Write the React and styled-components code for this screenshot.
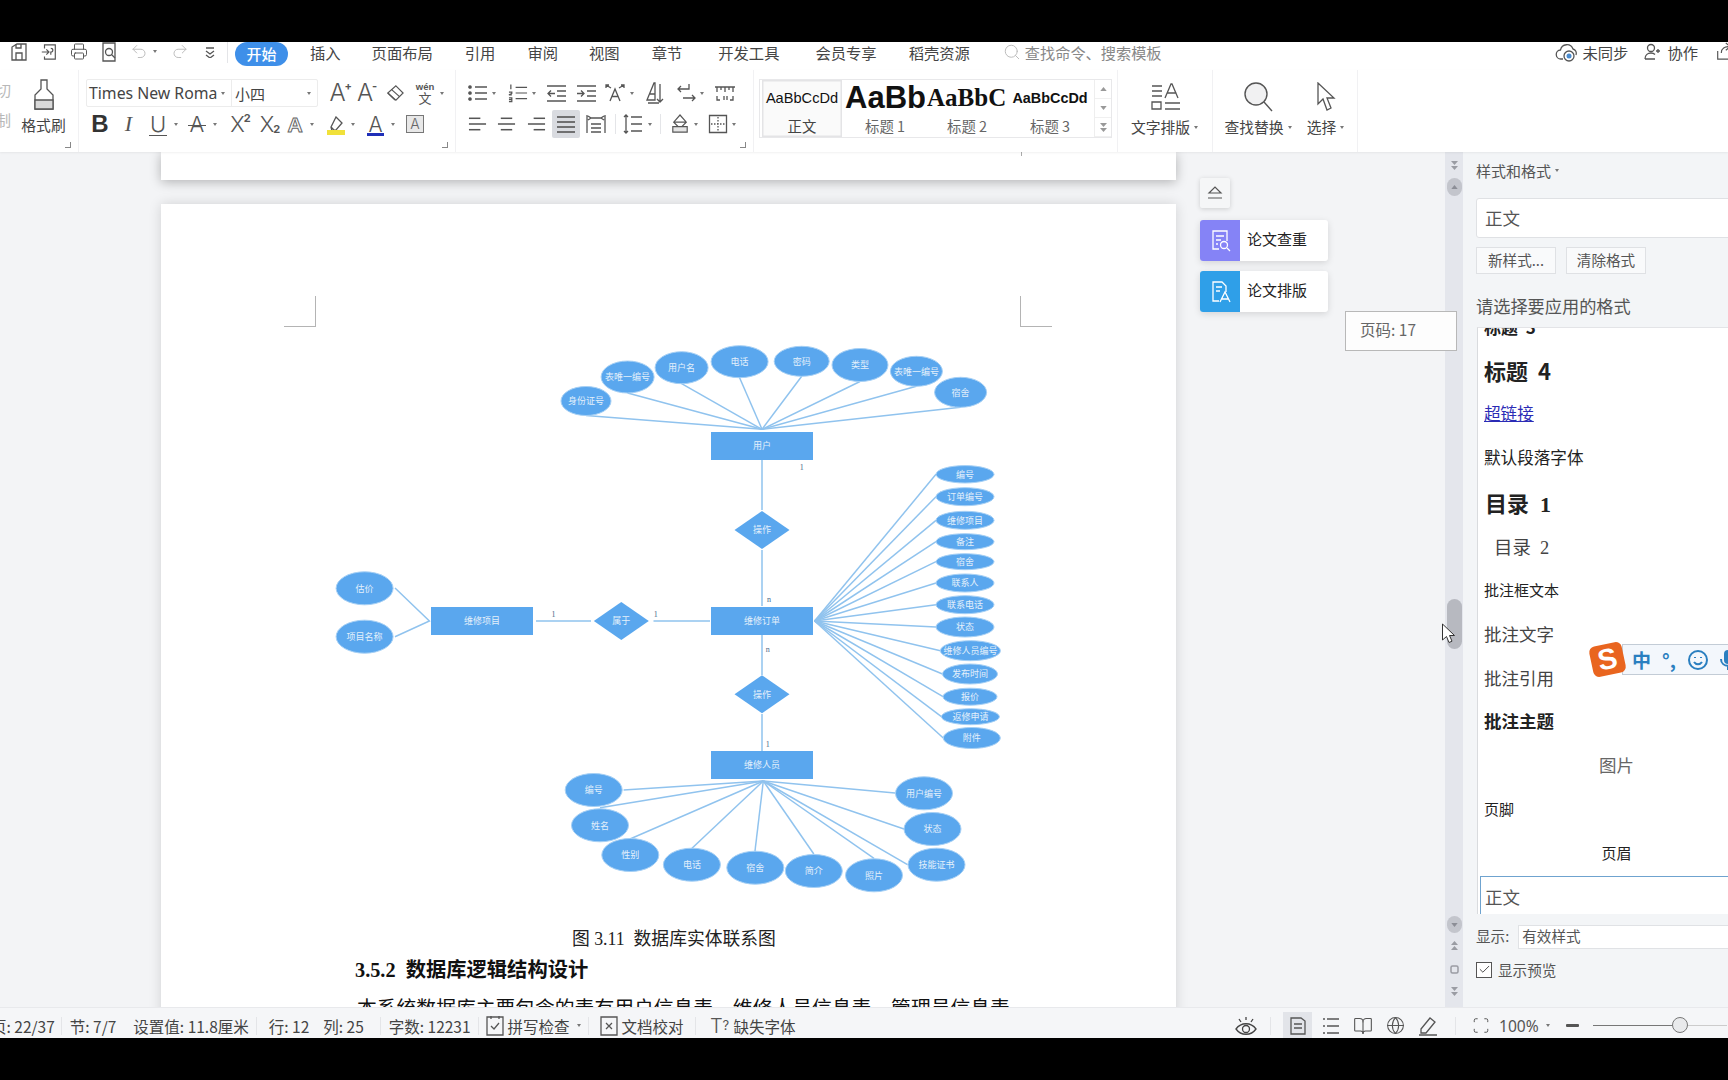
import React from "react";
import styled, { createGlobalStyle } from "styled-components";
import { Printer, Undo2, Redo2, Search, Globe, BookOpen, Scan, Check } from "lucide-react";

const GlobalStyle = createGlobalStyle`
  html, body {
    margin: 0;
    padding: 0;
    background: #000;
    overflow: hidden;
  }
  * { box-sizing: border-box; }
`;

const sans = `"Noto Sans CJK SC", "Noto Sans", sans-serif`;
const serif = `"Liberation Serif", "Noto Sans CJK SC", serif`;
const latin = `"Liberation Sans", "Noto Sans CJK SC", sans-serif`;
const thin = `Inter, "Liberation Sans", sans-serif`;

const Screen = styled.div`
  width: 1728px;
  height: 1080px;
  display: flex;
  flex-direction: column;
  overflow: hidden;
  background: #000;
  position: relative;
  font-family: ${sans};
  color: #444;
`;

const BlackBar = styled.div`
  height: 42px;
  flex-shrink: 0;
  background: #000;
`;

/* ---------- tab row ---------- */
const TabRow = styled.div`
  height: 28px;
  flex-shrink: 0;
  display: flex;
  align-items: center;
  background: #fff;
  padding: 0 0 9px 10px;
  overflow: hidden;
`;

const QuickBtn = styled.span`
  width: ${(p) => p.$w || 18}px;
  height: 22px;
  flex-shrink: 0;
  display: flex;
  align-items: center;
  justify-content: center;
  margin-left: ${(p) => p.$ml || 0}px;
  color: ${(p) => (p.$off ? "#bbb" : "#555")};
`;

const Divider = styled.span`
  width: 1px;
  height: ${(p) => p.$h || 22}px;
  flex-shrink: 0;
  background: #e4e5e8;
  margin-left: ${(p) => p.$ml || 0}px;
`;

const ActiveTab = styled.div`
  width: 53px;
  height: 24px;
  margin-left: 7px;
  align-self: flex-start;
  border-radius: 12px;
  background: #3e8fe9;
  color: #fff;
  font-size: 15px;
  font-weight: 500;
  padding-bottom: 2px;
  display: flex;
  align-items: center;
  justify-content: center;
`;

const Tab = styled.span`
  font-size: 15.3px;
  color: #444;
  white-space: nowrap;
  margin-left: ${(p) => p.$ml}px;
`;

const SearchHint = styled.span`
  font-size: 15.2px;
  color: #888;
  white-space: nowrap;
  margin-left: 4px;
`;

const RightTools = styled.div`
  margin-left: auto;
  margin-right: -5px;
  display: flex;
  align-items: center;
  font-size: 14.8px;
  color: #444;
  white-space: nowrap;
`;

/* ---------- ribbon ---------- */
const Ribbon = styled.div`
  height: 82px;
  flex-shrink: 0;
  display: flex;
  background: #fff;
  box-shadow: 0 1px 2px rgba(0, 0, 0, 0.06);
  position: relative;
  z-index: 2;
`;

const Group = styled.div`
  width: ${(p) => p.$w}px;
  flex-shrink: 0;
  height: 82px;
  position: relative;
  padding-top: ${(p) => p.$pt ?? 9}px;
  padding-left: ${(p) => p.$pl || 0}px;
  border-right: 1px solid #f1f1f3;
  display: flex;
  flex-direction: ${(p) => (p.$row ? "row" : "column")};
  gap: ${(p) => (p.$row ? p.$gap || 0 : 3)}px;
`;

const Launcher = styled.span`
  position: absolute;
  right: 7px;
  bottom: 4px;
  width: 6px;
  height: 6px;
  border-right: 1px solid #888;
  border-bottom: 1px solid #888;
`;

const CutCol = styled.div`
  width: 21px;
  flex-shrink: 0;
  display: flex;
  flex-direction: column;
  gap: 15px;
  padding-top: 3px;
  overflow: hidden;
  color: #b8b8b8;
  font-size: 15px;
  line-height: 15px;
  text-indent: -4px;
`;

const BigTool = styled.div`
  width: ${(p) => p.$w}px;
  flex-shrink: 0;
  display: flex;
  flex-direction: column;
  align-items: center;
`;

const BigIcon = styled.div`
  height: 32px;
  display: flex;
  align-items: center;
  justify-content: center;
  color: #555;
  margin-left: ${(p) => p.$ml || 0}px;
`;

const BigLabel = styled.div`
  margin-top: 4px;
  font-size: 14.8px;
  line-height: 20px;
  color: #444;
  white-space: nowrap;
  display: flex;
  align-items: center;
`;

const ToolRow = styled.div`
  height: 28px;
  display: flex;
  align-items: center;
`;

const FontCombo = styled.div`
  width: 232px;
  height: 28px;
  flex-shrink: 0;
  display: flex;
  align-items: center;
  border: 1px solid #ececec;
  border-radius: 2px;
  font-family: "Noto Sans", ${sans};
  font-size: 15.8px;
  color: #444;
`;

const FontName = styled.div`
  width: 145px;
  height: 100%;
  padding-left: 2px;
  display: flex;
  align-items: center;
  border-right: 1px solid #ececec;
  white-space: nowrap;
  overflow: hidden;
`;

const FontSize = styled.div`
  flex: 1;
  padding: 0 6px 0 3px;
  display: flex;
  align-items: center;
  justify-content: space-between;
  font-size: 15px;
`;

const Tool = styled.span`
  width: ${(p) => p.$w}px;
  height: ${(p) => p.$h || 24}px;
  flex-shrink: 0;
  margin-left: ${(p) => p.$ml || 0}px;
  display: flex;
  align-items: center;
  justify-content: center;
  color: #555;
  position: relative;
`;

const ActiveTool = styled(Tool)`
  background: #d9dbe0;
  border-radius: 2px;
`;

const BoxedTool = styled(Tool)`
  background: #e8e8e8;
  border: 1px solid #777;
`;

const Caret = styled.span`
  width: 0;
  height: 0;
  flex-shrink: 0;
  margin-left: ${(p) => p.$ml || 0}px;
  border-left: 2.5px solid transparent;
  border-right: 2.5px solid transparent;
  border-top: 3px solid #777;
`;

const Glyph = styled.span`
  font-family: ${(p) => p.$font || thin};
  font-size: ${(p) => p.$size || 22}px;
  font-weight: ${(p) => p.$weight || 300};
  font-style: ${(p) => (p.$italic ? "italic" : "normal")};
  line-height: 1;
  color: ${(p) => p.$color || "#555"};
  position: relative;
`;

const HollowGlyph = styled(Glyph)`
  color: #fff;
  -webkit-text-stroke: 1px #666;
`;

const Sup = styled.span`
  font-size: 11px;
  font-weight: 700;
  position: absolute;
  left: 100%;
  margin-left: -1px;
  top: ${(p) => (p.$sub ? 11 : 0)}px;
`;

const WenStack = styled.span`
  display: flex;
  flex-direction: column;
  align-items: center;
  line-height: 1;
  font-size: 13px;
  color: #555;
  span {
    font-family: ${latin};
    font-size: 9.5px;
    font-weight: 700;
    margin-bottom: -1px;
  }
`;

const Underbar = styled.span`
  position: absolute;
  left: ${(p) => p.$l ?? 0}px;
  right: ${(p) => p.$l ?? 0}px;
  bottom: ${(p) => p.$b ?? 1}px;
  height: ${(p) => p.$t ?? 3}px;
  background: ${(p) => p.$c};
`;

const Gallery = styled.div`
  width: 353px;
  height: 59px;
  margin-left: 5px;
  display: flex;
  align-items: stretch;
  border: 1px solid #e8e8ea;
  padding-left: 2px;
`;

const StyleCell = styled.div`
  width: 80px;
  flex-shrink: 0;
  margin-left: ${(p) => p.$ml || 0}px;
  display: flex;
  flex-direction: column;
  align-items: center;
  background: ${(p) => (p.$on ? "#fafafa" : "transparent")};
  box-shadow: ${(p) => (p.$on ? "inset 0 0 0 1.5px #e4e4e6" : "none")};
  overflow: hidden;
`;

const Sample = styled.div`
  height: 36px;
  width: 100%;
  display: flex;
  align-items: center;
  justify-content: ${(p) => p.$j || "center"};
  font-family: ${(p) => p.$font || latin};
  font-size: ${(p) => p.$size}px;
  font-weight: ${(p) => p.$weight || 400};
  color: #111;
  white-space: nowrap;
  overflow: hidden;
`;

const StyleName = styled.div`
  font-size: 14.4px;
  line-height: 20px;
  color: ${(p) => (p.$on ? "#444" : "#666")};
  white-space: nowrap;
`;

const GalleryScroll = styled.div`
  width: 17px;
  margin-left: 4px;
  border-left: 1px solid #eee;
  display: flex;
  flex-direction: column;
  color: #999;
  span {
    flex: 1;
    display: flex;
    align-items: center;
    justify-content: center;
    border-bottom: 1px solid #f0f0f0;
  }
`;

/* ---------- main ---------- */
const Main = styled.div`
  height: 855px;
  flex-shrink: 0;
  display: flex;
  position: relative;
  background: #f3f5f7;
`;

const DocArea = styled.div`
  width: 1445px;
  flex-shrink: 0;
  height: 100%;
  position: relative;
  overflow: hidden;
  background: #f3f4f6;
`;

const PageEnd = styled.div`
  width: 1015px;
  height: 28px;
  margin-left: 161px;
  background: #fff;
  box-shadow: 0 2px 12px rgba(0, 0, 0, 0.28);
  display: flex;
  justify-content: flex-end;
  padding-right: 154px;
`;

const CropTick = styled.span`
  width: 1px;
  height: 4px;
  background: #aaa;
`;

const Page = styled.div`
  width: 1015px;
  height: 1100px;
  margin: 24px 0 0 161px;
  padding: 92px 124px 0 123px;
  background: #fff;
  box-shadow: 0 0 12px rgba(0, 0, 0, 0.14);
  color: #111;
`;

const CropRow = styled.div`
  display: flex;
  justify-content: space-between;
`;

const CropMark = styled.span`
  width: 32px;
  height: 31px;
  margin-bottom: -1px;
  border-bottom: 1px solid #b4b4b4;
  border-right: ${(p) => (p.$right ? "none" : "1px solid #b4b4b4")};
  border-left: ${(p) => (p.$right ? "1px solid #b4b4b4" : "none")};
`;

const DiagramSvg = styled.svg`
  display: block;
  width: 767px;
  height: 600px;
`;

const Caption = styled.div`
  height: 26px;
  line-height: 26px;
  margin-left: 288px;
  font-family: ${serif};
  font-size: 17.8px;
  white-space: pre;
  color: #222;
`;

const SectionHead = styled.div`
  height: 28px;
  line-height: 28px;
  margin: 4px 0 0 71px;
  font-family: ${serif};
  font-size: 20.3px;
  font-weight: 700;
  white-space: pre;
  color: #111;
`;

const Para = styled.div`
  margin: 10px 0 0 73px;
  font-family: ${serif};
  font-size: 19.8px;
  line-height: 28px;
  white-space: nowrap;
  color: #111;
`;

const FloatCol = styled.div`
  position: absolute;
  left: 1200px;
  top: 26px;
  display: flex;
  flex-direction: column;
  align-items: flex-start;
  gap: 10px;
`;

const CollapseBtn = styled.div`
  width: 30px;
  height: 30px;
  margin-bottom: 2px;
  display: flex;
  align-items: center;
  justify-content: center;
  background: #f5f6f7;
  border-radius: 2px;
  box-shadow: 0 1px 5px rgba(0, 0, 0, 0.16);
  color: #555;
`;

const FloatCard = styled.div`
  width: 128px;
  height: 41px;
  display: flex;
  align-items: center;
  background: #fff;
  border-radius: 3px;
  overflow: hidden;
  box-shadow: 0 2px 7px rgba(0, 0, 0, 0.13);
  font-size: 15px;
  color: #222;
`;

const FloatLabel = styled.span`
  margin-bottom: 4px;
`;

const FloatIcon = styled.div`
  width: 40px;
  height: 100%;
  margin-right: 7px;
  display: flex;
  align-items: center;
  justify-content: center;
  background: ${(p) => p.$bg};
  color: #fff;
`;

const PageTip = styled.div`
  position: absolute;
  left: 1345px;
  top: 159px;
  width: 112px;
  height: 40px;
  padding: 0 0 5px 14px;
  display: flex;
  align-items: center;
  background: #fdfdfd;
  border: 1px solid #b8b8b8;
  font-size: 15.5px;
  color: #666;
  z-index: 3;
`;

/* scrollbar */
const ScrollTrack = styled.div`
  width: 18px;
  flex-shrink: 0;
  height: 100%;
  padding-top: 8px;
  background: #e4e6ec;
  display: flex;
  flex-direction: column;
  align-items: center;
  color: #9a9ca3;
`;

const ScrollMark = styled.span`
  height: ${(p) => p.$h}px;
  margin-top: ${(p) => p.$mt || 0}px;
  display: flex;
  align-items: center;
  justify-content: center;
`;

const ScrollButton = styled.div`
  width: 15px;
  height: ${(p) => p.$h}px;
  margin-top: ${(p) => p.$mt}px;
  border-radius: 8px;
  background: #c3c5cc;
  color: #8c8e96;
  display: flex;
  align-items: center;
  justify-content: center;
`;

const Thumb = styled.div`
  width: 15px;
  height: 50px;
  margin-top: 403px;
  border-radius: 8px;
  background: #b7b9c0;
`;

/* side panel */
const Panel = styled.aside`
  width: 300px;
  flex-shrink: 0;
  height: 100%;
  padding: 7px 0 0 13px;
  background: #f3f5f7;
  display: flex;
  flex-direction: column;
  align-items: flex-start;
`;

const PanelTitle = styled.div`
  height: 22px;
  display: flex;
  align-items: center;
  font-size: 15px;
  color: #555;
`;

const StyleInput = styled.div`
  width: 290px;
  height: 40px;
  margin-top: 17px;
  padding: 0 0 2px 8px;
  display: flex;
  align-items: center;
  background: #fff;
  border: 1px solid #dfe1e4;
  border-radius: 3px;
  font-family: ${serif};
  font-size: 17.5px;
  color: #555;
`;

const PanelButtons = styled.div`
  margin-top: 9px;
  display: flex;
  gap: 10px;
`;

const PanelButton = styled.div`
  width: 80px;
  height: 27px;
  padding-bottom: 2px;
  display: flex;
  align-items: center;
  justify-content: center;
  background: #f9fafb;
  border: 1px solid #dfe1e4;
  font-size: 14.6px;
  color: #555;
`;

const SectionLabel = styled.div`
  height: 24px;
  margin-top: 20px;
  line-height: 24px;
  font-size: 17.2px;
  color: #555;
`;

const StyleList = styled.div`
  width: 278px;
  height: 587px;
  margin: 9px 0 0 1px;
  background: #fff;
  border-left: 1px solid #d9dbde;
  border-top: 1px solid #e3e4e7;
  overflow: hidden;
`;

const ListItem = styled.div`
  height: 44px;
  flex-shrink: 0;
  margin-top: ${(p) => p.$mt || 0}px;
  display: flex;
  align-items: center;
  justify-content: ${(p) => (p.$center ? "center" : "flex-start")};
  padding-left: ${(p) => (p.$center ? 0 : p.$pl || 6)}px;
  font-family: ${(p) => (p.$serif ? serif : sans)};
  font-size: ${(p) => p.$size || 15}px;
  font-weight: ${(p) => (p.$bold ? 700 : 400)};
  color: ${(p) => p.$color || "#222"};
  white-space: pre;
  text-decoration: ${(p) => (p.$link ? "underline" : "none")};
`;

const SelectedItem = styled.div`
  height: 38px;
  margin: 2px 0 0 2px;
  padding: 2px 0 0 4px;
  display: flex;
  align-items: center;
  border: 1px solid #6fa3cf;
  border-bottom: none;
  font-family: ${serif};
  font-size: 17.5px;
  color: #555;
`;

const ShowRow = styled.div`
  margin-top: 11px;
  height: 24px;
  padding-bottom: 3px;
  display: flex;
  align-items: center;
  font-size: 14.6px;
  color: #555;
  white-space: nowrap;
`;

const ShowSelect = styled.div`
  width: 280px;
  height: 24px;
  flex-shrink: 0;
  margin: 3px 0 0 9px;
  padding: 0 0 3px 3px;
  display: flex;
  align-items: center;
  background: #fff;
  border: 1px solid #e0e2e5;
`;

const CheckRow = styled.div`
  margin-top: 10px;
  display: flex;
  align-items: center;
  gap: 6px;
  font-size: 14.6px;
  color: #555;
`;

const CheckBox = styled.span`
  width: 16px;
  height: 16px;
  display: flex;
  align-items: center;
  justify-content: center;
  border: 1px solid #555;
  background: #fff;
  color: #333;
`;

/* ime bar and mouse pointer lie over the page */
const ImeBar = styled.div`
  position: absolute;
  left: 1591px;
  top: 490px;
  width: 160px;
  height: 35px;
  display: flex;
  align-items: center;
  z-index: 4;
`;

const ImeLogo = styled.div`
  width: 33px;
  height: 31px;
  flex-shrink: 0;
  position: relative;
  z-index: 1;
  transform: rotate(-12deg);
  border-radius: 6px;
  background: #e9651f;
  color: #fff;
  font-family: ${latin};
  font-size: 29px;
  font-weight: 700;
  line-height: 31px;
  text-align: center;
`;

const ImeBody = styled.div`
  flex: 1;
  height: 31px;
  margin-left: -2px;
  padding-left: 9px;
  display: flex;
  align-items: center;
  gap: 11px;
  background: #f3f7fc;
  border: 1px solid #c3ccd6;
  color: #2a7fc0;
  font-size: 19px;
  font-weight: 700;
`;

const Pointer = styled.svg`
  position: absolute;
  left: 1441px;
  top: 471px;
  z-index: 5;
`;

/* ---------- status bar ---------- */
const StatusBar = styled.div`
  height: 31px;
  flex-shrink: 0;
  display: flex;
  align-items: center;
  padding-top: 5px;
  background: #f5f6f8;
  border-top: 1px solid #e8e9ec;
  overflow: hidden;
  font-size: 15.5px;
  color: #444;
  white-space: nowrap;
  position: relative;
  z-index: 2;
`;

const StatusText = styled.span`
  margin-left: ${(p) => p.$ml}px;
  flex-shrink: 0;
`;

const StatusRight = styled.div`
  width: 493px;
  margin-left: auto;
  flex-shrink: 0;
  display: flex;
  align-items: center;
`;

const StatusActive = styled(Tool)`
  background: #e2e4e9;
  margin-top: 0;
`;

const ZoomText = styled.span`
  margin-left: 9px;
  font-family: "Noto Sans", ${sans};
  font-size: 15.6px;
  color: #555;
`;

const MinusBar = styled.span`
  width: 13px;
  height: 3px;
  margin-left: 16px;
  background: #555;
  border-radius: 1px;
`;

const ZoomTrack = styled.div`
  width: 134px;
  height: 1px;
  margin-left: 14px;
  background: linear-gradient(to right, #777 0, #777 87px, #ccc 87px);
  position: relative;
`;

const ZoomKnob = styled.span`
  position: absolute;
  left: 79px;
  top: -8px;
  width: 16px;
  height: 16px;
  border-radius: 50%;
  background: #e9eaec;
  border: 1px solid #777;
`;

/* ---------- drawn icons ---------- */
const Svg = ({ w = 20, h = 20, vb, sw = 1.3, children }) => (
  <svg width={w} height={h} viewBox={vb || `0 0 ${w} ${h}`} fill="none" stroke="currentColor" strokeWidth={sw}>
    {children}
  </svg>
);

const SaveIcon = () => (
  <Svg w={18} h={20}>
    <path d="M2 18V5l5-3h9v16z" />
    <path d="M6 18v-7h6v7M6 2v4h5V2" />
  </Svg>
);
const ExportIcon = () => (
  <Svg w={20} h={20}>
    <path d="M5 6V2h12v16H5v-3" />
    <path d="M2 10h8M7 7l3 3-3 3" />
    <path d="M12 6c3 0 3 4 0 4v3" />
  </Svg>
);
const PreviewIcon = () => (
  <Svg w={18} h={20}>
    <path d="M3 1h12v18H3z" />
    <circle cx="9" cy="10" r="3.5" />
    <path d="M11.5 12.5 15 16" />
  </Svg>
);
const CustomizeIcon = () => (
  <Svg w={12} h={12}>
    <path d="M2 2h8M2 5l4 3 4-3M2 9l4 3 4-3" />
  </Svg>
);
const CloudIcon = () => (
  <Svg w={24} h={20}>
    <path d="M8 17H6a4.500 4.500 0 0 1-.5-9 6.500 6.500 0 0 1 12.500-1 4.500 4.500 0 0 1 3 6" />
    <circle cx="14" cy="14" r="5" />
    <circle cx="14" cy="14" r="2.500" fill="#4a8cd0" stroke="none" />
  </Svg>
);
const PersonIcon = () => (
  <Svg w={18} h={20}>
    <circle cx="8" cy="6" r="3.5" />
    <path d="M2 17c0-4 3-6 6-6 2 0 3 .5 4 1.5M2 17h10M13 9h4M15 7v4" />
  </Svg>
);
const ShareIcon = () => (
  <Svg w={20} h={20}>
    <path d="M3 9v9h13v-5M7 11c0-5 4-7 9-7M12 0l5 4-5 4" />
  </Svg>
);
const BrushIcon = () => (
  <Svg w={24} h={32}>
    <path d="M9 1h6v9l6 6v14H3V16l6-6z" />
    <path d="M3 21h18v9H3z" fill="#d9d9d9" />
  </Svg>
);
const TypesetIcon = () => (
  <Svg w={32} h={28}>
    <path d="M2 3h10M2 8h10M2 13h10M2 19h9v7H2zM15 26h15M15 20h15" />
    <path d="M15 15 21 1h1l6 14M17.5 10h9" />
  </Svg>
);
const FindIcon = () => (
  <Svg w={30} h={30} sw={1.4}>
    <circle cx="13" cy="12" r="11" fill="#f1f1f2" />
    <path d="m21 20 8 9" />
  </Svg>
);
const SelectIcon = () => (
  <Svg w={22} h={30}>
    <path d="M3 1v21l5-5 4 11 4-2-4-10h7z" />
  </Svg>
);
const EraserIcon = () => (
  <Svg w={20} h={20}>
    <path d="m11 2 8 8-8 8-9-8z" />
    <path d="m6 6 9 8" />
    <path d="M2 10l8 8" />
  </Svg>
);
const Lines = ({ ys, xs }) => (
  <Svg w={20} h={20} sw={1.6}>
    {ys.map((y, i) => (
      <path key={y} d={`M${xs[i][0]} ${y}H${xs[i][1]}`} />
    ))}
  </Svg>
);
const BulletIcon = () => (
  <Svg w={21} h={20}>
    <path d="M8 4h12M8 10h12M8 16h12" />
    <circle cx="3" cy="4" r="1.2" fill="currentColor" />
    <circle cx="3" cy="10" r="1.2" fill="currentColor" />
    <circle cx="3" cy="16" r="1.2" fill="currentColor" />
  </Svg>
);
const NumberIcon = () => (
  <Svg w={21} h={20}>
    <path d="M8 4h12M8 10h12M8 16h12M3 1v5M1 9h3v1.500l-3 1.500h3M1 15h3v4H1M1 17h3" />
  </Svg>
);
const IndentIcon = ({ dir }) => (
  <Svg w={21} h={20}>
    <path d="M1 3h19M11 8h9M11 13h9M1 18h19" />
    <path d={dir < 0 ? "M9 10.500H2M5 7.500l-3 3 3 3" : "M1 10.500h7M5 7.500l3 3-3 3"} />
  </Svg>
);
const CrossSortIcon = () => (
  <Svg w={20} h={20}>
    <path d="M5 18 10 6l5 12M6.500 13.500h7" />
    <path d="M1 2l5 3M19 2l-5 3M1 5V2h3M19 5V2h-3" />
  </Svg>
);
const SortIcon = () => (
  <Svg w={21} h={22}>
    <path d="M2 18 9 1h1v17zM5 12h5M3 21h11M15 2v18M12 17l3 3 3-3" />
  </Svg>
);
const ReturnIcon = () => (
  <Svg w={20} h={20}>
    <path d="M13 1v5H2M5 3 2 6l3 3M7 15h12M16 12l3 3-3 3" />
  </Svg>
);
const RulerIcon = () => (
  <Svg w={22} h={18}>
    <path d="M1 3h20M3 3v5M7 3v3M11 3v5M15 3v3M19 3v5M3 12v4h3M19 12v4h-3M10 12v4M13 12v4" />
  </Svg>
);
const DistIcon = () => (
  <Svg w={20} h={20}>
    <path d="M1 1v18M19 1v18M5 4h10M2 2l3 2-3 2M18 2l-3 2 3 2M5 10h10M5 14h10M5 18h10" />
  </Svg>
);
const SpacingIcon = () => (
  <Svg w={20} h={22}>
    <path d="M3 2v18M1 4l2-2 2 2M1 18l2 2 2-2M8 4h11M8 11h11M8 18h11" />
  </Svg>
);
const ShadeIcon = () => (
  <Svg w={20} h={22}>
    <path d="m10 1 7 8-7 7-7-7zM3 9h14" />
    <path d="M2 14h16v6H2z" fill="#e5e5e5" />
  </Svg>
);
const BorderIcon = () => (
  <Svg w={20} h={20}>
    <path d="M1.500 1.500h17v17h-17z" />
    <path d="M10 3v14M3 10h14" strokeDasharray="1.500 1.500" />
  </Svg>
);
const MarkerIcon = () => (
  <Svg w={18} h={16}>
    <path d="m9 1 6 6-6 7-4 1-1-4zM4 11l3 3" />
  </Svg>
);
const CollapseIcon = () => (
  <Svg w={16} h={14} sw={1.2}>
    <path d="M2 7 8 1l6 6zM1 12h14" />
  </Svg>
);
const CheckDocIcon = () => (
  <Svg w={22} h={24}>
    <path d="M10 20H4V2h14v10M7 7h8M7 11h5M7 15h2" />
    <circle cx="15" cy="16" r="3.5" />
    <path d="m18 19 3 3" />
  </Svg>
);
const FormatDocIcon = () => (
  <Svg w={22} h={24}>
    <path d="M10 21H4V2h9l4 4v6M7 7h6M7 11h4" />
    <path d="m11 22 5-10 5 10M13 19h6" />
  </Svg>
);
const SpellIcon = () => (
  <Svg w={20} h={22}>
    <path d="M2 2h16v18H2z" />
    <path d="M6 1v3M14 1v3M6 11l3 3 5-6" />
  </Svg>
);
const ProofIcon = () => (
  <Svg w={20} h={22}>
    <path d="M2 2h16v18H2zM7 8l6 6M13 8l-6 6" />
  </Svg>
);
const PageViewIcon = () => (
  <Svg w={18} h={20}>
    <path d="M2 2h10l4 3v13H2z" />
    <path d="M5 8h8M5 12h8" />
  </Svg>
);
const OutlineIcon = () => (
  <Svg w={18} h={18} sw={1.6}>
    <path d="M5 2h12M5 9h12M5 16h12M1 2h2M1 9h2M1 16h2" />
  </Svg>
);
const PenIcon = () => (
  <Svg w={21} h={20}>
    <path d="m3 13 9-11 5 4-9 11H3zM1 19h18" />
  </Svg>
);
const EyeIcon = () => (
  <Svg w={22} h={22}>
    <path d="M1 14c5-7 15-7 20 0-5 7-15 7-20 0z" />
    <circle cx="11" cy="14" r="3.500" />
    <path d="M11 2v3M4 4l2 3M18 4l-2 3" />
  </Svg>
);
const DoubleArrow = ({ up }) => (
  <svg width="9" height="10" viewBox="0 0 9 10" fill="currentColor">
    {up ? <path d="M4.500 0 8 4H1zM4.500 5 8 9H1z" /> : <path d="M1 1h7L4.500 5zM1 6h7L4.500 10z" />}
  </svg>
);
const SmallTri = ({ up }) => (
  <svg width="7" height="4" viewBox="0 0 8 5" fill="currentColor">
    <path d={up ? "M4 0l4 5H0z" : "M0 0h8L4 5z"} />
  </svg>
);

/* ---------- er diagram data (coordinates follow the viewBox) ---------- */
const ATTR_TOP = [
  ["身份证号", 586, 401, 25, 14.5],
  ["表唯一编号", 627.6, 377, 26.5, 16],
  ["用户名", 681.6, 367.7, 26.5, 16],
  ["电话", 739.6, 361.7, 28.5, 16],
  ["密码", 801.7, 361.3, 27.5, 15],
  ["类型", 860, 365, 28, 16.5],
  ["表唯一编号", 916.4, 371.3, 26, 15],
  ["宿舍", 960.6, 392.3, 26, 15],
];

const ATTR_RIGHT = [
  ["编号", 965, 474.3, 29, 8.7],
  ["订单编号", 965, 496.7, 29, 9],
  ["维修项目", 965, 520.3, 29, 9],
  ["备注", 965, 541.7, 29, 8],
  ["宿舍", 965, 561.7, 29, 8],
  ["联系人", 965, 583, 29, 9],
  ["联系电话", 965, 604.7, 29, 9],
  ["状态", 965, 627, 29, 10],
  ["维修人员编号", 970.4, 650.7, 30, 10],
  ["发布时间", 970, 674, 27.5, 10],
  ["报价", 970, 696.7, 27, 8.5],
  ["返修申请", 970.4, 716.7, 29, 8],
  ["附件", 971.8, 738, 28.5, 10.5],
];

const ATTR_BOTTOM = [
  ["编号", 593.7, 790, 623.6, 790],
  ["姓名", 600, 825.3, 600, 807.7],
  ["性别", 630.3, 855, 630, 839],
  ["电话", 691.9, 864.7, 692, 848.3],
  ["宿舍", 755.3, 867.7, 755, 851],
  ["简介", 813.8, 871, 813.8, 854],
  ["照片", 874, 875.3, 874, 858.3],
  ["技能证书", 936.5, 864.7, 907.5, 864.7],
  ["状态", 932.5, 829, 904, 829],
  ["用户编号", 924, 793.3, 895, 793],
];

const ER_FILL = "#5aa7ee";
const ER_EDGE = "#a6d0f5";
const ER_LINE = "#90c3ee";

const Label = ({ x, y, size = 9, children }) => (
  <text x={x} y={y + 3.2} textAnchor="middle" fontSize={size} fontFamily={sans} fill="#e4f0fb">
    {children}
  </text>
);

const Attr = ({ name, x, y, rx = 28.5, ry = 16.5 }) => (
  <g>
    <ellipse cx={x} cy={y} rx={rx} ry={ry} fill={ER_FILL} stroke={ER_EDGE} strokeWidth="1" />
    <Label x={x} y={y}>{name}</Label>
  </g>
);

const Entity = ({ name, x, y }) => (
  <g>
    <rect x={x} y={y} width="102" height="28" fill={ER_FILL} />
    <Label x={x + 51} y={y + 14}>{name}</Label>
  </g>
);

const Relation = ({ name, x, y }) => (
  <g>
    <path d={`M${x} ${y - 19}L${x + 27.5} ${y}L${x} ${y + 19}L${x - 27.5} ${y}Z`} fill={ER_FILL} />
    <Label x={x} y={y}>{name}</Label>
  </g>
);

const Card = ({ x, y, children }) => (
  <text x={x} y={y + 3} textAnchor="middle" fontSize="8" fontFamily={serif} fill="#4a6a8a">
    {children}
  </text>
);

function ErDiagram() {
  return (
    <DiagramSvg viewBox="284 326 767 600">
      <g stroke={ER_LINE} strokeWidth="1.5" fill="none">
        {ATTR_TOP.map(([name, x, y, , ry]) => (
          <path key={name + x} d={`M${x} ${y + ry}L762 429.300`} />
        ))}
        {ATTR_RIGHT.map(([name, x, y, rx]) => (
          <path key={name + x} d={`M${x - rx} ${y}L814.600 621`} />
        ))}
        {ATTR_BOTTOM.map(([name, , , ex, ey]) => (
          <path key={name + ex} d={`M${ex} ${ey}L763.300 781`} />
        ))}
        <path d="M762 459V510M762 550V606M762 635V675M762 714V751" />
        <path d="M536 621H591M653.500 621H710" />
        <path d="M395 588L429.400 621L395 636.700" />
      </g>
      {ATTR_TOP.map(([name, x, y, rx, ry]) => (
        <Attr key={name + x} name={name} x={x} y={y} rx={rx} ry={ry} />
      ))}
      {ATTR_RIGHT.map(([name, x, y, rx, ry]) => (
        <Attr key={name + x} name={name} x={x} y={y} rx={rx} ry={ry} />
      ))}
      {ATTR_BOTTOM.map(([name, x, y]) => (
        <Attr key={name + x} name={name} x={x} y={y} />
      ))}
      <Attr name="估价" x={364.6} y={588.3} />
      <Attr name="项目名称" x={364.6} y={636.7} />
      <Entity name="用户" x={711} y={432} />
      <Entity name="维修订单" x={711} y={607} />
      <Entity name="维修项目" x={431} y={607} />
      <Entity name="维修人员" x={711} y={751} />
      <Relation name="操作" x={762} y={530} />
      <Relation name="属于" x={621.3} y={621} />
      <Relation name="操作" x={762} y={694.3} />
      <Card x={801.7} y={466.7}>1</Card>
      <Card x={769} y={599}>n</Card>
      <Card x={553.5} y={614}>1</Card>
      <Card x={655.7} y={614}>1</Card>
      <Card x={767.8} y={649.3}>n</Card>
      <Card x={767.8} y={744}>1</Card>
    </DiagramSvg>
  );
}

/* ---------- page ---------- */
function App() {
  return (
    <Screen>
      <GlobalStyle />
      <BlackBar />

      <TabRow>
        <QuickBtn><SaveIcon /></QuickBtn>
        <QuickBtn $ml={12}><ExportIcon /></QuickBtn>
        <QuickBtn $ml={12}><Printer size={19} strokeWidth={1.3} /></QuickBtn>
        <QuickBtn $ml={12}><PreviewIcon /></QuickBtn>
        <QuickBtn $ml={12} $off><Undo2 size={19} strokeWidth={1.3} /></QuickBtn>
        <Caret $ml={5} />
        <QuickBtn $ml={14} $off><Redo2 size={19} strokeWidth={1.3} /></QuickBtn>
        <QuickBtn $ml={12}><CustomizeIcon /></QuickBtn>
        <Divider $ml={8} />
        <ActiveTab>开始</ActiveTab>
        <Tab $ml={22}>插入</Tab>
        <Tab $ml={31}>页面布局</Tab>
        <Tab $ml={32}>引用</Tab>
        <Tab $ml={32}>审阅</Tab>
        <Tab $ml={31}>视图</Tab>
        <Tab $ml={32}>章节</Tab>
        <Tab $ml={36}>开发工具</Tab>
        <Tab $ml={36}>会员专享</Tab>
        <Tab $ml={32}>稻壳资源</Tab>
        <QuickBtn $ml={33} $off><Search size={18} strokeWidth={1.3} /></QuickBtn>
        <SearchHint>查找命令、搜索模板</SearchHint>
        <RightTools>
          <QuickBtn $w={24}><CloudIcon /></QuickBtn>
          <Tab $ml={3}>未同步</Tab>
          <QuickBtn $ml={15}><PersonIcon /></QuickBtn>
          <Tab $ml={6}>协作</Tab>
          <QuickBtn $ml={17}><ShareIcon /></QuickBtn>
        </RightTools>
      </TabRow>

      <Ribbon>
        <Group $w={79} $row>
          <CutCol>
            <span>切</span>
            <span>制</span>
          </CutCol>
          <BigTool $w={45}>
            <BigIcon><BrushIcon /></BigIcon>
            <BigLabel>格式刷</BigLabel>
          </BigTool>
          <Launcher />
        </Group>

        <Group $w={377} $pl={7}>
          <ToolRow>
            <FontCombo>
              <FontName>
                Times New Roma<Caret $ml={4} />
              </FontName>
              <FontSize>
                小四<Caret />
              </FontSize>
            </FontCombo>
            <Tool $w={19} $ml={10}><Glyph $size={24}>A<Sup>+</Sup></Glyph></Tool>
            <Tool $w={18} $ml={9}><Glyph $size={24}>A<Sup>-</Sup></Glyph></Tool>
            <Tool $w={18} $ml={12}><EraserIcon /></Tool>
            <Tool $w={20} $ml={11}><WenStack><span>wén</span>文</WenStack></Tool>
            <Caret $ml={5} />
          </ToolRow>
          <ToolRow>
            <Tool $w={16} $ml={6}><Glyph $size={24} $weight={700} $font={latin} $color="#333">B</Glyph></Tool>
            <Tool $w={9} $ml={16}><Glyph $size={22} $italic $font={serif}>I</Glyph></Tool>
            <Tool $w={18} $ml={16}>
              <Glyph $size={22}>U</Glyph>
              <Underbar $c="#555" $t={1} $b={0} />
            </Tool>
            <Caret $ml={7} />
            <Tool $w={18} $ml={10}>
              <Glyph $size={22}>A</Glyph>
              <Underbar $c="#555" $t={1} $b={10} />
            </Tool>
            <Caret $ml={7} />
            <Tool $w={21} $ml={10}><Glyph $size={22}>X<Sup>2</Sup></Glyph></Tool>
            <Tool $w={22} $ml={8}><Glyph $size={22}>X<Sup $sub>2</Sup></Glyph></Tool>
            <Tool $w={18} $ml={8}><HollowGlyph $size={21} $weight={700} $font={latin}>A</HollowGlyph></Tool>
            <Caret $ml={6} />
            <Tool $w={18} $ml={13}>
              <MarkerIcon />
              <Underbar $c="#f1e13a" $t={5} $b={1} />
            </Tool>
            <Caret $ml={6} />
            <Tool $w={17} $ml={12}>
              <Glyph $size={21}>A</Glyph>
              <Underbar $c="#1f2fb8" $t={3} $b={0} />
            </Tool>
            <Caret $ml={7} />
            <BoxedTool $w={18} $h={18} $ml={11}><Glyph $size={14} $color="#666">A</Glyph></BoxedTool>
          </ToolRow>
          <Launcher />
        </Group>

        <Group $w={298}>
          <ToolRow>
            <Tool $w={21} $ml={11}><BulletIcon /></Tool>
            <Caret $ml={4} />
            <Tool $w={20} $ml={12}><NumberIcon /></Tool>
            <Caret $ml={4} />
            <Tool $w={21} $ml={10}><IndentIcon dir={-1} /></Tool>
            <Tool $w={21} $ml={9}><IndentIcon dir={1} /></Tool>
            <Tool $w={20} $ml={8}><CrossSortIcon /></Tool>
            <Caret $ml={5} />
            <Tool $w={21} $ml={11}><SortIcon /></Tool>
            <Tool $w={20} $ml={10}><ReturnIcon /></Tool>
            <Caret $ml={4} />
            <Tool $w={22} $ml={10}><RulerIcon /></Tool>
          </ToolRow>
          <ToolRow>
            <Tool $w={19} $ml={12}><Lines ys={[4, 10, 16]} xs={[[1, 13], [1, 19], [1, 13]]} /></Tool>
            <Tool $w={19} $ml={10}><Lines ys={[4, 10, 16]} xs={[[4, 16], [1, 19], [4, 16]]} /></Tool>
            <Tool $w={19} $ml={11}><Lines ys={[4, 10, 16]} xs={[[7, 19], [1, 19], [7, 19]]} /></Tool>
            <ActiveTool $w={28} $h={28} $ml={6}><Lines ys={[3, 8, 13, 18]} xs={[[1, 19], [1, 19], [1, 19], [1, 19]]} /></ActiveTool>
            <Tool $w={20} $ml={6}><DistIcon /></Tool>
            <Divider $ml={9} $h={20} />
            <Tool $w={20} $ml={7}><SpacingIcon /></Tool>
            <Caret $ml={5} />
            <Divider $ml={8} $h={20} />
            <Tool $w={18} $ml={10}><ShadeIcon /></Tool>
            <Caret $ml={5} />
            <Tool $w={20} $ml={10}><BorderIcon /></Tool>
            <Caret $ml={4} />
          </ToolRow>
          <Launcher />
        </Group>

        <Group $w={364}>
          <Gallery>
            <StyleCell $on>
              <Sample $size={14.6}>AaBbCcDd</Sample>
              <StyleName $on>正文</StyleName>
            </StyleCell>
            <StyleCell $ml={3}>
              <Sample $size={31} $weight={700} $j="flex-start">AaBb</Sample>
              <StyleName>标题 1</StyleName>
            </StyleCell>
            <StyleCell $ml={2}>
              <Sample $size={25} $weight={700} $font={serif} $j="flex-start">AaBbC</Sample>
              <StyleName>标题 2</StyleName>
            </StyleCell>
            <StyleCell $ml={3}>
              <Sample $size={14.4} $weight={700}>AaBbCcDd</Sample>
              <StyleName>标题 3</StyleName>
            </StyleCell>
            <GalleryScroll>
              <span><SmallTri up /></span>
              <span><SmallTri /></span>
              <span><DoubleArrow /></span>
            </GalleryScroll>
          </Gallery>
        </Group>

        <Group $w={95} $row $pt={11} $pl={10}>
          <BigTool $w={73}>
            <BigIcon $ml={2}><TypesetIcon /></BigIcon>
            <BigLabel>文字排版<Caret $ml={4} /></BigLabel>
          </BigTool>
        </Group>

        <Group $w={145} $row $pt={11} $pl={10} $gap={12}>
          <BigTool $w={70}>
            <BigIcon><FindIcon /></BigIcon>
            <BigLabel>查找替换<Caret $ml={4} /></BigLabel>
          </BigTool>
          <BigTool $w={41}>
            <BigIcon><SelectIcon /></BigIcon>
            <BigLabel>选择<Caret $ml={4} /></BigLabel>
          </BigTool>
        </Group>
      </Ribbon>

      <Main>
        <DocArea>
          <PageEnd><CropTick /></PageEnd>
          <Page>
            <CropRow>
              <CropMark />
              <CropMark $right />
            </CropRow>
            <ErDiagram />
            <Caption>图 3.11  数据库实体联系图</Caption>
            <SectionHead>3.5.2  数据库逻辑结构设计</SectionHead>
            <Para>本系统数据库主要包含的表有用户信息表、维修人员信息表、管理员信息表</Para>
          </Page>
          <FloatCol>
            <CollapseBtn><CollapseIcon /></CollapseBtn>
            <FloatCard>
              <FloatIcon $bg="#8583f6"><CheckDocIcon /></FloatIcon>
              <FloatLabel>论文查重</FloatLabel>
            </FloatCard>
            <FloatCard>
              <FloatIcon $bg="#2f9fe8"><FormatDocIcon /></FloatIcon>
              <FloatLabel>论文排版</FloatLabel>
            </FloatCard>
          </FloatCol>
        </DocArea>

        <ScrollTrack>
          <ScrollMark $h={10}><DoubleArrow /></ScrollMark>
          <ScrollButton $h={18} $mt={8}><SmallTri up /></ScrollButton>
          <Thumb />
          <ScrollButton $h={17} $mt={267}><SmallTri /></ScrollButton>
          <ScrollMark $h={10} $mt={8}><DoubleArrow up /></ScrollMark>
          <ScrollMark $h={10} $mt={13}>
            <svg width="9" height="9" viewBox="0 0 9 9" fill="none" stroke="currentColor" strokeWidth="1.500">
              <rect x="1" y="1" width="7" height="7" rx="1.500" />
            </svg>
          </ScrollMark>
          <ScrollMark $h={10} $mt={12}><DoubleArrow /></ScrollMark>
        </ScrollTrack>

        <Panel>
          <PanelTitle>样式和格式<Caret $ml={4} /></PanelTitle>
          <StyleInput>正文</StyleInput>
          <PanelButtons>
            <PanelButton>新样式...</PanelButton>
            <PanelButton>清除格式</PanelButton>
          </PanelButtons>
          <SectionLabel>请选择要应用的格式</SectionLabel>
          <StyleList>
            <ListItem $mt={-24} $size={17} $bold>{"标题  3"}</ListItem>
            <ListItem $size={22} $bold>{"标题  4"}</ListItem>
            <ListItem $mt={-1} $size={16.6} $link $color="#2b2bb5">超链接</ListItem>
            <ListItem $size={16.6}>默认段落字体</ListItem>
            <ListItem $mt={1} $size={22} $bold $serif $pl={7}>{"目录  1"}</ListItem>
            <ListItem $size={18.4} $serif $pl={16} $color="#444">{"目录  2"}</ListItem>
            <ListItem $mt={-1} $size={15}>批注框文本</ListItem>
            <ListItem $size={17.5} $serif $color="#444">批注文字</ListItem>
            <ListItem $size={17.5} $serif $color="#444">批注引用</ListItem>
            <ListItem $mt={-1} $size={17.5} $serif $bold>批注主题</ListItem>
            <ListItem $size={17.5} $serif $center $color="#666">图片</ListItem>
            <ListItem $size={15}>页脚</ListItem>
            <ListItem $size={15} $center>页眉</ListItem>
            <SelectedItem>正文</SelectedItem>
          </StyleList>
          <ShowRow>
            显示:
            <ShowSelect>有效样式</ShowSelect>
          </ShowRow>
          <CheckRow>
            <CheckBox><Check size={13} strokeWidth={1.6} /></CheckBox>
            显示预览
          </CheckRow>
        </Panel>

        <PageTip>页码: 17</PageTip>

        <ImeBar>
          <ImeLogo>S</ImeLogo>
          <ImeBody>
            中
            <span>°,</span>
            <svg width="22" height="22" viewBox="0 0 22 22" fill="none" stroke="currentColor" strokeWidth="2">
              <circle cx="11" cy="11" r="9" />
              <path d="M7 13c2 3 6 3 8 0M8 8v1M14 8v1" />
            </svg>
            <svg width="16" height="22" viewBox="0 0 16 22" fill="currentColor">
              <rect x="4" y="1" width="8" height="14" rx="4" />
              <path d="M1 10c0 9 14 9 14 0M8 16v5" fill="none" stroke="currentColor" strokeWidth="2" />
            </svg>
          </ImeBody>
        </ImeBar>

        <Pointer width="16" height="22" viewBox="0 0 16 22">
          <path d="M1.500 1v16l4-3.500 2.500 6 3-1.300-2.500-5.700h5z" fill="#fff" stroke="#333" strokeWidth="1" />
        </Pointer>
      </Main>

      <StatusBar>
        <StatusText $ml={-9}>页: 22/37</StatusText>
        <Divider $ml={6} $h={18} />
        <StatusText $ml={8}>节: 7/7</StatusText>
        <StatusText $ml={17}>设置值: 11.8厘米</StatusText>
        <Divider $ml={7} $h={18} />
        <StatusText $ml={12}>行: 12</StatusText>
        <StatusText $ml={14}>列: 25</StatusText>
        <Divider $ml={16} $h={18} />
        <StatusText $ml={8}>字数: 12231</StatusText>
        <Divider $ml={7} $h={18} />
        <Tool $w={20} $ml={6}><SpellIcon /></Tool>
        <StatusText $ml={3}>拼写检查</StatusText>
        <Caret $ml={7} />
        <Divider $ml={7} $h={18} />
        <Tool $w={20} $ml={10}><ProofIcon /></Tool>
        <StatusText $ml={3}>文档校对</StatusText>
        <Divider $ml={11} $h={18} />
        <Tool $w={22} $ml={13}>
          <Glyph $size={20}>T</Glyph>
          <Glyph $size={13} $weight={400}>?</Glyph>
        </Tool>
        <StatusText $ml={3}>缺失字体</StatusText>
        <StatusRight>
          <EyeIcon />
          <Divider $ml={13} $h={18} />
          <StatusActive $w={29} $h={28} $ml={12}><PageViewIcon /></StatusActive>
          <Tool $w={18} $ml={10}><OutlineIcon /></Tool>
          <Tool $w={20} $ml={13}><BookOpen size={20} strokeWidth={1.3} /></Tool>
          <Tool $w={19} $ml={13}><Globe size={19} strokeWidth={1.3} /></Tool>
          <Tool $w={21} $ml={13}><PenIcon /></Tool>
          <Divider $ml={16} $h={18} />
          <Tool $w={18} $ml={16}><Scan size={19} strokeWidth={1.3} /></Tool>
          <ZoomText>100%</ZoomText>
          <Caret $ml={7} />
          <MinusBar />
          <ZoomTrack><ZoomKnob /></ZoomTrack>
        </StatusRight>
      </StatusBar>

      <BlackBar />
    </Screen>
  );
}

export default App;
